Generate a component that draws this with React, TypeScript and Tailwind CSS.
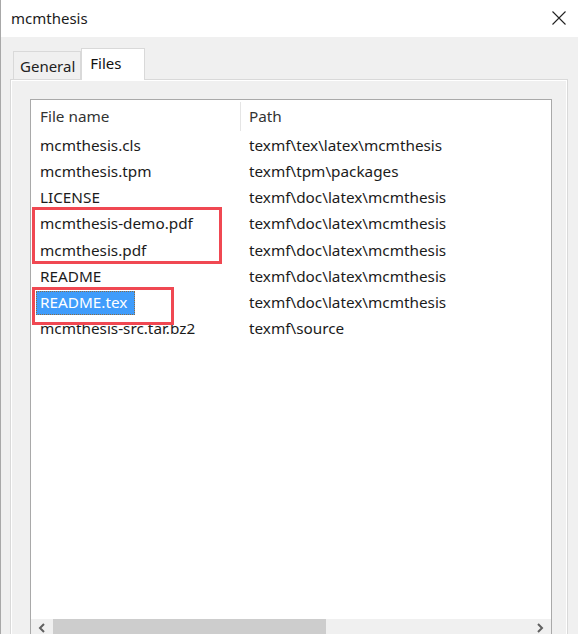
import React from "react";

const rows: [string, string][] = [
  ["mcmthesis.cls", "texmf\\tex\\latex\\mcmthesis"],
  ["mcmthesis.tpm", "texmf\\tpm\\packages"],
  ["LICENSE", "texmf\\doc\\latex\\mcmthesis"],
  ["mcmthesis-demo.pdf", "texmf\\doc\\latex\\mcmthesis"],
  ["mcmthesis.pdf", "texmf\\doc\\latex\\mcmthesis"],
  ["README", "texmf\\doc\\latex\\mcmthesis"],
  ["README.tex", "texmf\\doc\\latex\\mcmthesis"],
  ["mcmthesis-src.tar.bz2", "texmf\\source"],
];

export default function App() {
  return (
    <div
      className="relative w-[578px] h-[634px] overflow-hidden bg-[#f0f0f0] border-l border-[#a8a8a8] flex flex-col text-[#1b1b1b]"
      style={{ fontFamily: '"Noto Sans", "Open Sans", sans-serif' }}
    >
      {/* title bar */}
      <div className="h-[37px] shrink-0 bg-white flex items-center justify-between pl-[10px] pr-[10px]">
        <span className="text-[15px] leading-none">mcmthesis</span>
        <svg width="16" height="16" viewBox="0 0 16 16" className="mr-[1px] mt-[-2px]">
          <path d="M1.5 1.5 L14.5 14.5 M14.5 1.5 L1.5 14.5" stroke="#222" strokeWidth="1.1" fill="none" />
        </svg>
      </div>

      {/* body */}
      <div className="flex-1 flex flex-col pl-[9px] pr-[10px] pt-[11px]">
        {/* tabs */}
        <div className="h-[31px] flex items-end pl-[3px] relative z-10">
          <div className="h-[28px] pl-[6px] pr-[5px] flex items-center border border-b-0 border-[#d9d9d9] bg-[#f0f0f0] text-[15px] text-[#222]">
            <span className="mt-[2px]">General</span>
          </div>
          <div className="h-[32px] w-[64px] -mb-px flex items-start pl-[8px] pt-[3px] border border-b-0 border-[#d9d9d9] bg-white text-[15px] text-[#111]">
            Files
          </div>
        </div>

        {/* panel */}
        <div className="flex-1 border border-[#d9d9d9] shadow-[inset_1px_1px_0_#ffffff,inset_-1px_0_0_#ffffff] bg-[#f0f0f0] pl-[19px] pr-[15px] pt-[19px]">
          <div className="h-[538px] border border-[#a9a9a9] bg-white flex flex-col">
            {/* header */}
            <div className="h-[32px] shrink-0 flex text-[15.3px] text-[#333]">
              <div className="w-[209px] pl-[9px] flex items-center pt-[1px]">File name</div>
              <div className="w-px mt-[2px] h-[29px] bg-[#e5e5e5]" />
              <div className="pl-[8px] flex items-center pt-[1px]">Path</div>
            </div>
            {/* rows */}
            <div className="flex flex-col">
              {rows.map(([name, path]) => {
                const selected = name === "README.tex";
                return (
                  <div key={name} className="h-[26.25px] flex items-center text-[15.3px]">
                    <div className="w-[209px] pl-[9px] flex items-center">
                      {selected ? (
                        <span className="h-[24px] -ml-[4px] pl-[3px] pr-[7px] flex items-center bg-[#3f9cfb] text-white border border-dotted border-[#8a6c45]">
                          {name}
                        </span>
                      ) : (
                        <span>{name}</span>
                      )}
                    </div>
                    <div className="w-px" />
                    <div className="pl-[8px]">{path}</div>
                  </div>
                );
              })}
            </div>
            <div className="flex-1" />
            {/* horizontal scrollbar */}
            <div className="h-[17px] shrink-0 bg-[#f0f0f0] flex items-center">
              <div className="w-[22px] h-full flex items-center justify-center">
                <svg width="8" height="10" viewBox="0 0 8 10">
                  <path d="M6 1 L2 5 L6 9" stroke="#606060" strokeWidth="2" fill="none" />
                </svg>
              </div>
              <div className="w-[273px] h-full bg-[#cdcdcd]" />
              <div className="flex-1" />
              <div className="w-[22px] h-full flex items-center justify-center">
                <svg width="8" height="10" viewBox="0 0 8 10">
                  <path d="M2 1 L6 5 L2 9" stroke="#606060" strokeWidth="2" fill="none" />
                </svg>
              </div>
            </div>
          </div>
        </div>
      </div>

      {/* red annotation boxes */}
      <div className="absolute left-[31px] top-[207px] w-[190px] h-[57px] border-[3px] border-[#f04852] pointer-events-none" />
      <div className="absolute left-[31px] top-[287px] w-[142px] h-[38px] border-[3px] border-[#f04852] pointer-events-none" />
    </div>
  );
}
